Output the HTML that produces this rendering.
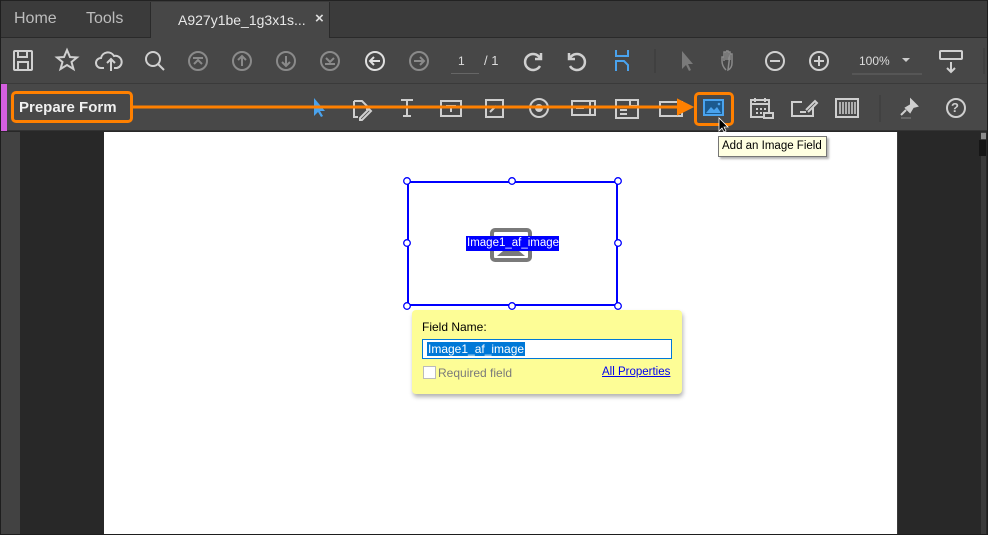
<!DOCTYPE html>
<html><head><meta charset="utf-8"><style>
*{margin:0;padding:0;box-sizing:border-box}
body{width:988px;height:535px;overflow:hidden;background:#282828;font-family:"Liberation Sans",sans-serif;position:relative}
.a{position:absolute;white-space:nowrap}
svg{position:absolute;overflow:visible}
</style></head><body>
<div class="a" style="left:0;top:0;width:988px;height:38px;background:#3b3b3b;border-top:1px solid #222;border-bottom:1px solid #2a2a2a"></div>
<div class="a" style="left:0;top:0;width:1px;height:535px;background:#1e1e1e;z-index:5"></div>
<div class="a" style="left:987px;top:0;width:1px;height:535px;background:#1e1e1e;z-index:5"></div>
<div class="a" style="left:0;top:534px;width:988px;height:1px;background:#1e1e1e;z-index:5"></div>
<div class="a" style="left:14px;top:10px;color:#bdbdbd;font-size:16px">Home</div>
<div class="a" style="left:86px;top:10px;color:#bdbdbd;font-size:16px">Tools</div>
<div class="a" style="left:150px;top:2px;width:180px;height:36px;background:#474747;border-left:1px solid #2a2a2a;border-right:1px solid #2a2a2a"></div>
<div class="a" style="left:178px;top:12px;color:#e8e8e8;font-size:14px">A927y1be_1g3x1s...</div>
<div class="a" style="left:315px;top:10px;color:#ddd;font-size:15px;font-weight:bold">×</div>
<div class="a" style="left:1px;top:38px;width:986px;height:46px;background:#474747;border-bottom:1px solid #3a3a3a"></div>
<svg width="988" height="84" style="left:0;top:0" fill="none" stroke="#d0d0d0" stroke-width="2">
<rect x="14" y="51" width="18" height="19" rx="1"/><rect x="18" y="51" width="9" height="6"/><rect x="18" y="62" width="10" height="8"/>
<path d="M67 50 l3 7 7 .5 -5.5 4.5 2 7 -6.5-4 -6.5 4 2-7 -5.5-4.5 7-.5z"/>
<path d="M104 68 h-3 a5 5 0 0 1 0-10 a7 7 0 0 1 13-2 a5 5 0 0 1 3 12 h-3 M111 71 v-12 m-4 4 l4-4 4 4"/>
<circle cx="153" cy="59" r="7"/><path d="M158 64 l6 6"/>
<g stroke="#8a8a8a"><circle cx="198" cy="61" r="9"/><path d="M193 58h10 M194 64l4-4 4 4"/>
<circle cx="242" cy="61" r="9"/><path d="M242 66v-10 m-4 4l4-4 4 4"/>
<circle cx="286" cy="61" r="9"/><path d="M286 56v10 m-4-4l4 4 4-4"/>
<circle cx="330" cy="61" r="9"/><path d="M325 64h10 M326 58l4 4 4-4"/>
<circle cx="419" cy="61" r="9"/><path d="M414 61h10 m-4-4l4 4-4 4"/></g>
<circle cx="375" cy="61" r="9" stroke="#e0e0e0"/><path d="M370 61h10 m-6-4l-4 4 4 4" stroke="#e0e0e0"/>
<path d="M540 58 a8 8 0 1 0 0 8 M541 53v6h-6" stroke-width="2.5"/>
<path d="M570 58 a8 8 0 1 1 0 8 M569 53v6h6" stroke-width="2.5"/>
<path d="M616 50v6h12v-6 M616 71v-10h8l4 4v6" stroke="#4aa3ee"/>
<path d="M655 49v24" stroke="#3a3a3a" stroke-width="1"/>
<path d="M682 51l0 18 4-4 3 6 2-1-3-6 5 0z" fill="#7a7a7a" stroke="none"/>
<path d="M726 70 c-3-3-4-6-4-9 v-4 h2 v4 m0 0 v-9 h2 v8 m0-9 h2 v9 m0-8 h2 v8 m0-6 h2 v9 c0 4-2 6-4 7z" stroke="#8a8a8a" stroke-width="1.5"/>
<circle cx="775" cy="61" r="9"/><path d="M770 61h10"/>
<circle cx="819" cy="61" r="9"/><path d="M814 61h10 M819 56v10"/>
<path d="M852 74h70" stroke="#666" stroke-width="1"/>
<path d="M902 58l4 4 4-4z" fill="#ccc" stroke="none"/>
<rect x="940" y="51" width="22" height="8" rx="1"/><path d="M951 62v10 m-4-4l4 4 4-4"/>
<path d="M984 48v26" stroke="#3a3a3a" stroke-width="1"/>
</svg>
<div class="a" style="left:458px;top:54px;color:#ddd;font-size:12px">1</div>
<div class="a" style="left:451px;top:73px;width:28px;height:1px;background:#666"></div>
<div class="a" style="left:484px;top:53px;color:#ddd;font-size:13px">/ 1</div>
<div class="a" style="left:859px;top:54px;color:#ddd;font-size:12px">100%</div>
<div class="a" style="left:1px;top:84px;width:986px;height:47px;background:#484848;border-bottom:1px solid #333"></div>
<div class="a" style="left:1px;top:84px;width:6px;height:47px;background:#d55fe0"></div>
<div class="a" style="left:11px;top:91px;width:122px;height:32px;border:3px solid #ff8000;border-radius:5px"></div>
<div class="a" style="left:19px;top:99px;color:#f0f0f0;font-size:15px;font-weight:bold">Prepare Form</div>
<svg width="988" height="140" style="left:0;top:0" fill="none" stroke="#cfcfcf" stroke-width="2">
<path d="M314 98v18l4-4 3 5 2-1-3-5h5z" fill="#4aa3ee" stroke="none"/>
<path d="M354 101h8l5 5v4 M354 101v16h4 M360 118l9-9 2 2-9 9h-2z"/>
<path d="M401 100h12 M407 100v16 M403 116h8"/>
<rect x="441" y="101" width="20" height="15"/><path d="M446 106h10 M451 106v6"/>
<rect x="486" y="100" width="17" height="17"/><path d="M490 112l6-6"/>
<circle cx="539" cy="108" r="9"/><circle cx="539" cy="108" r="3" fill="#cfcfcf"/>
<rect x="572" y="101" width="23" height="14"/><path d="M576 108h8 M590 101v14"/>
<rect x="616" y="100" width="22" height="18"/><path d="M630 100v6h8 M620 110h7 M620 114h7"/>
<rect x="660" y="102" width="22" height="14"/>
<path d="M133 107H690" stroke="#ff8000" stroke-width="3"/>
<path d="M678 100l14 7-14 7z" fill="#ff8000" stroke="#ff8000"/>
<rect x="751" y="100" width="18" height="17"/><path d="M751 104h18 M755 98v4 M765 98v4 M756 109h2 M760 109h2 M764 109h2 M756 113h2 M760 113h2"/><rect x="764" y="113" width="9" height="5" fill="#484848"/>
<path d="M802 102h-10v14h21v-9 M800 112h6 M806 110l9-9 2 2-9 9"/>
<rect x="836" y="99" width="22" height="18"/><path d="M840 102v12 M843 102v12 M846 102v12 M849 102v12 M852 102v12 M855 102v12" stroke-width="1.5"/>
<path d="M880 95v27" stroke="#3a3a3a" stroke-width="1"/>
<path d="M911 100l6 6-4 1-3 5-4-4 5-3z M906 110l-5 5" fill="#cfcfcf"/><path d="M901 118h10" stroke="#666"/>
<circle cx="956" cy="108" r="9"/>
</svg>
<div class="a" style="left:951px;top:100px;color:#cfcfcf;font-size:13px;font-weight:bold">?</div>
<div class="a" style="left:694px;top:92px;width:40px;height:34px;border:3px solid #ff8000;border-radius:5px"></div>
<svg width="988" height="140" style="left:0;top:0">
<rect x="704" y="100" width="19" height="15" fill="#1c5a8e" stroke="#4aa3ee" stroke-width="2"/>
<path d="M706 113l5-6 3 3 3-3 4 6z" fill="#4aa3ee"/><circle cx="719" cy="104" r="1.3" fill="#4aa3ee"/>
<path d="M719 118v13l3-3 2 4 2-1-2-4h4z" fill="#000" stroke="#fff" stroke-width="0.8"/>
</svg>
<div class="a" style="left:1px;top:132px;width:19px;height:402px;background:#424242"></div>
<div class="a" style="left:104px;top:132px;width:793px;height:402px;background:#fff"></div>
<div class="a" style="left:897px;top:132px;width:1px;height:402px;background:#3a3a3a"></div>
<div class="a" style="left:981px;top:132px;width:5px;height:402px;background:#3a3a3a"></div>
<div class="a" style="left:981px;top:133px;width:5px;height:6px;background:#8a8a8a"></div>
<div class="a" style="left:979px;top:140px;width:7px;height:16px;background:#161616"></div>
<div class="a" style="left:718px;top:136px;width:109px;height:21px;background:#ffffe1;border:1px solid #767676;box-shadow:2px 2px 2px rgba(0,0,0,.3);font-size:11.5px;color:#000;padding:3px 0 0 3px">Add an Image Field</div>
<div class="a" style="left:407px;top:181px;width:211px;height:125px;border:2px solid #0000ff"></div>
<svg width="988" height="535" style="left:0;top:0">
<g fill="#fff" stroke="#0000ff" stroke-width="1.3">
<circle cx="407" cy="181" r="3.3"/><circle cx="512" cy="181" r="3.3"/><circle cx="618" cy="181" r="3.3"/>
<circle cx="407" cy="243" r="3.3"/><circle cx="618" cy="243" r="3.3"/>
<circle cx="407" cy="306" r="3.3"/><circle cx="512" cy="306" r="3.3"/><circle cx="618" cy="306" r="3.3"/></g>
<rect x="492" y="230" width="38" height="30" rx="3" fill="none" stroke="#7a7a7a" stroke-width="4"/>
<path d="M497 256l6-5h16l6 5z" fill="#7a7a7a"/>
</svg>
<div class="a" style="left:466px;top:236px;background:#0000ff;color:#fff;font-size:11.5px;padding:0 1px;line-height:15px;width:93px">Image1_af_image</div>
<div class="a" style="left:412px;top:310px;width:270px;height:84px;background:#fdfd96;border-radius:4px;box-shadow:1px 3px 4px rgba(0,0,0,.3)"></div>
<div class="a" style="left:422px;top:320px;font-size:12px;color:#000">Field Name:</div>
<div class="a" style="left:422px;top:339px;width:250px;height:20px;background:#fff;border:1px solid #0078d7"></div>
<div class="a" style="left:427px;top:342px;background:#0078d7;color:#fff;font-size:12px;line-height:14px;padding:0 1px">Image1_af_image</div>
<div class="a" style="left:423px;top:366px;width:13px;height:13px;background:#fff;border:1px solid #bbb"></div>
<div class="a" style="left:438px;top:366px;font-size:12px;color:#7a7a7a">Required field</div>
<div class="a" style="left:602px;top:366px;font-size:11.5px;color:#0000ee;text-decoration:underline">All Properties</div>
</body></html>
